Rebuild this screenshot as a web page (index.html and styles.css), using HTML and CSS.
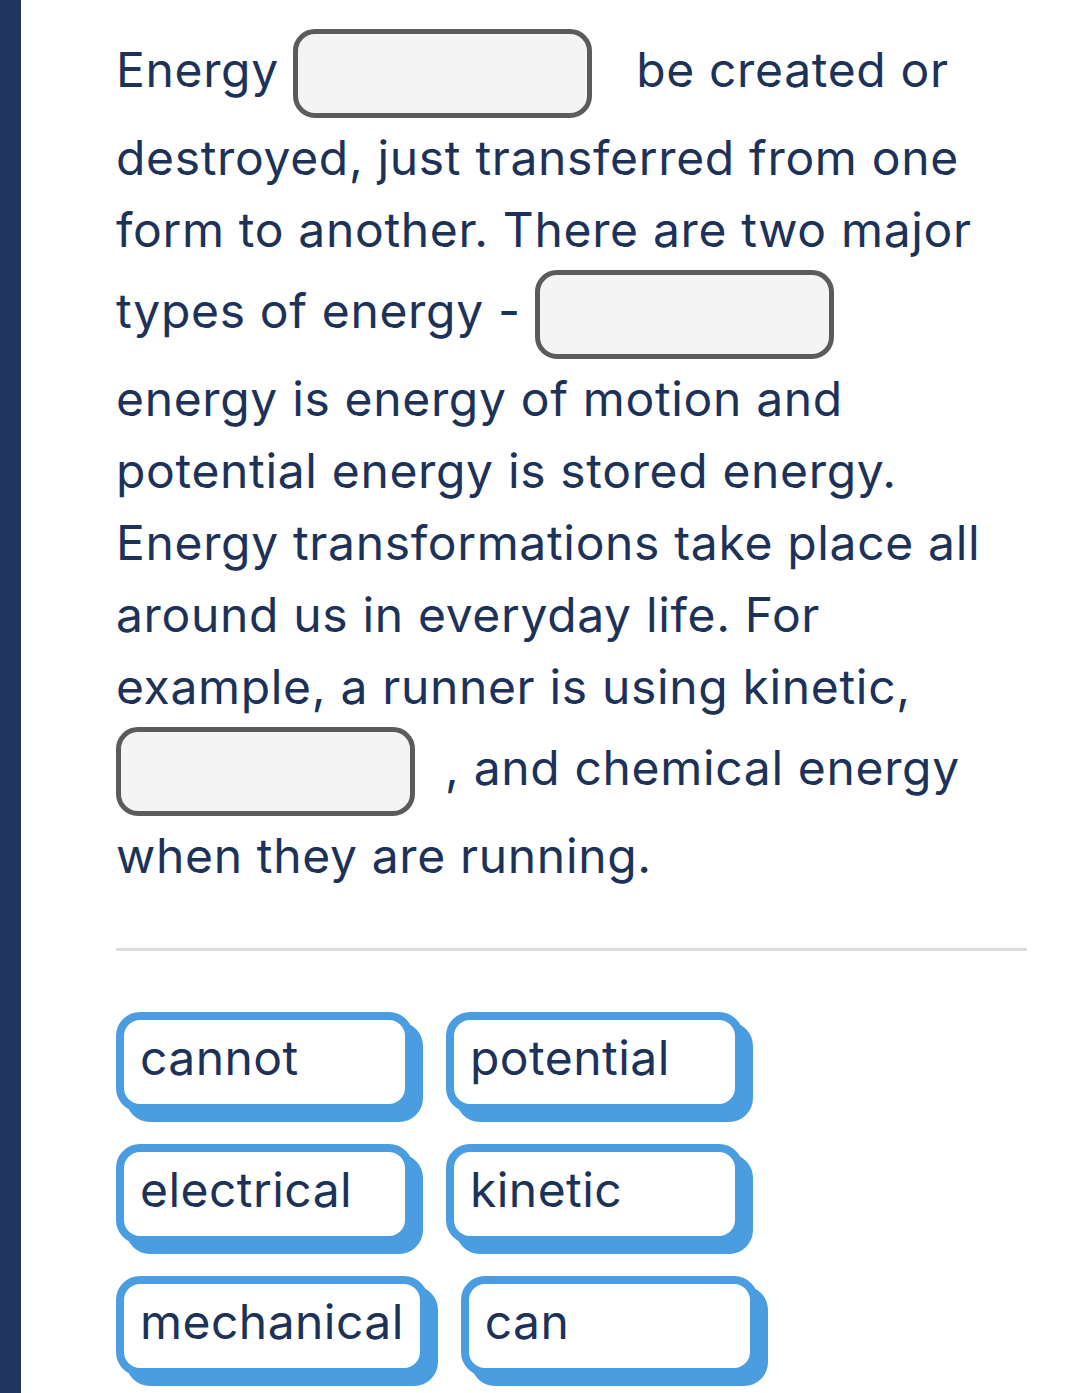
FILE: index.html
```html
<!DOCTYPE html>
<html>
<head>
<meta charset="utf-8">
<link rel="stylesheet" href="styles.css">
</head>
<body>
<div class="page">
  <div class="bar"></div>
  <main class="content">
    <p class="passage">Energy <span class="blank"></span> be created or destroyed, just transferred from one form to another. There are two major types of energy - <span class="blank"></span> energy is energy of motion and potential energy is stored energy. Energy transformations take place all around us in everyday life. For example, a runner is using kinetic, <span class="blank"></span>, and chemical energy when they are running.</p>
    <hr class="divider">
    <div class="bank">
      <span class="chip">cannot</span>
      <span class="chip">potential</span>
      <span class="chip">electrical</span>
      <span class="chip">kinetic</span>
      <span class="chip">mechanical</span>
      <span class="chip">can</span>
    </div>
  </main>
</div>
</body>
</html>
```

FILE: styles.css
```css
html, body {
  margin: 0;
  padding: 0;
  background: #ffffff;
}
body {
  font-family: "Inter", "Liberation Sans", sans-serif;
  color: #1c3259;
}
.page {
  display: flex;
  min-height: 1393px;
}
.bar {
  width: 21px;
  flex: none;
  background: #20355e;
}
.content {
  width: 911px;
  padding: 25px 0 0 95px;
}
.passage {
  margin: 0;
  max-width: 880px;
  font-size: 48px;
  line-height: 72px;
  letter-spacing: 0.66px;
}
.blank {
  display: inline-block;
  box-sizing: border-box;
  width: 299px;
  height: 89px;
  margin: 4px 30px 4px 0;
  vertical-align: middle;
  background: #f4f4f4;
  border: 5px solid #5b5b5b;
  border-radius: 22px;
}
.divider {
  margin: 56px 0 0 0;
  border: none;
  height: 3px;
  background: #dddddd;
}
.bank {
  display: flex;
  flex-wrap: wrap;
  gap: 32px 33px;
  margin-top: 61px;
}
.chip {
  box-sizing: border-box;
  min-width: 297px;
  height: 100px;
  padding: 2px 16px 10px;
  font-size: 48px;
  line-height: 72px;
  letter-spacing: 0.45px;
  background: #ffffff;
  border: 8px solid #499de0;
  border-radius: 24px;
  box-shadow: 10px 10px 0 #499de0;
}
```
